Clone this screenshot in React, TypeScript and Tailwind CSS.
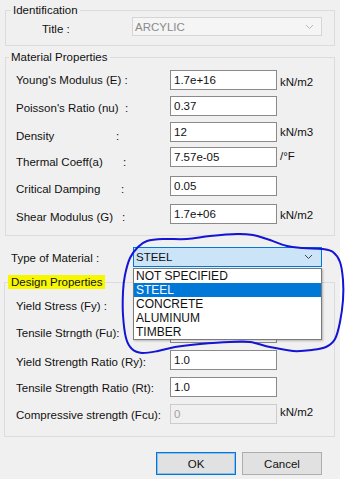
import React from 'react'

const font = "font-['Liberation_Sans',Arial,sans-serif]"

function Chevron({ color }: { color: string }) {
  return (
    <svg width="9" height="6" viewBox="0 0 9 6" className="shrink-0">
      <polyline points="1,1 4.5,4.5 8,1" fill="none" stroke={color} strokeWidth="1" />
    </svg>
  )
}

interface RowProps {
  mt: string
  label: string
  colonW?: string
  lpt: string
  value: string
  unit?: string
  upt?: string
  disabled?: boolean
  pl: string
}

function Row({ mt, label, colonW, lpt, value, unit, upt, disabled, pl }: RowProps) {
  return (
    <div className={`flex items-start h-[20px] ${mt} ${pl}`}>
      <span className={`w-[154px] shrink-0 whitespace-pre ${lpt}`}>
        {colonW ? (
          <>
            <span className={`inline-block ${colonW}`}>{label}</span>:
          </>
        ) : (
          label
        )}
      </span>
      <div
        className={`w-[107px] h-[20px] shrink-0 border pl-[3px] leading-[18px] ${
          disabled
            ? 'border-[#cccccc] bg-[#f0f0f0] text-[#a0a0a0]'
            : 'border-[#8a8a8a] bg-white text-[#111]'
        }`}
      >
        {value}
      </div>
      {unit && <span className={`ml-[3px] ${upt}`}>{unit}</span>}
    </div>
  )
}

// hand drawn circle around the dropdown
const scribble: [number, number][] = [
  [130, 258], [138, 247], [147, 241], [163, 239], [187, 239], [210, 236],
  [237, 234], [253, 235], [267, 239], [287, 246], [303, 248], [323, 249],
  [333, 252], [340, 262], [343, 280], [343, 300], [340, 322], [335, 339],
  [326, 347], [312, 350], [293, 351], [270, 347], [250, 342], [230, 342],
  [200, 344], [175, 347], [158, 351], [142, 353], [132, 349], [126, 338],
  [123, 315], [123, 292], [125, 275],
]

function smoothClosed(p: [number, number][]) {
  const n = p.length
  let d = `M${p[0][0]},${p[0][1]}`
  for (let i = 0; i < n; i++) {
    const p0 = p[(i - 1 + n) % n]
    const p1 = p[i]
    const p2 = p[(i + 1) % n]
    const p3 = p[(i + 2) % n]
    const c1x = p1[0] + (p2[0] - p0[0]) / 6
    const c1y = p1[1] + (p2[1] - p0[1]) / 6
    const c2x = p2[0] - (p3[0] - p1[0]) / 6
    const c2y = p2[1] - (p3[1] - p1[1]) / 6
    d += ` C${c1x.toFixed(1)},${c1y.toFixed(1)} ${c2x.toFixed(1)},${c2y.toFixed(1)} ${p2[0]},${p2[1]}`
  }
  return d
}

const options = ['NOT SPECIFIED', 'STEEL', 'CONCRETE', 'ALUMINUM', 'TIMBER']

export default function App() {
  return (
    <div className={`w-[347px] h-[479px] bg-white ${font} text-[11.5px] text-[#111] leading-[14px]`}>
      <div className="relative w-[340px] h-[479px] bg-[#f0f0f0] pt-[3px]">
        {/* Identification */}
        <fieldset className="ml-[5px] w-[330px] border border-[#dcdcdc] pb-[9px]">
          <legend className="ml-[5px] px-[2px]">Identification</legend>
          <div className="flex items-start pl-[36px]">
            <span className="w-[90px] pt-[5px]">Title :</span>
            <div className="w-[190px] h-[19px] border border-[#d5d5d5] bg-[#f5f5f5] flex items-center justify-between pl-[2px] pr-[7px] text-[#8a8a8a]">
              <span>ARCYLIC</span>
              <Chevron color="#b8b8b8" />
            </div>
          </div>
        </fieldset>

        {/* Material Properties */}
        <fieldset className="mt-[4px] ml-[5px] w-[330px] border border-[#dcdcdc] pb-[11px]">
          <legend className="ml-[3px] px-[2px]">Material Properties</legend>
          <Row pl="pl-[10px]" mt="mt-[6px]" label="Young's Modulus (E) :" lpt="pt-[3px]" value="1.7e+16" unit="kN/m2" upt="pt-[5px]" />
          <Row pl="pl-[10px]" mt="mt-[6px]" label="Poisson's Ratio (nu)" colonW="w-[109px]" lpt="pt-[5px]" value="0.37" />
          <Row pl="pl-[10px]" mt="mt-[6px]" label="Density" colonW="w-[100px]" lpt="pt-[7px]" value="12" unit="kN/m3" upt="pt-[3px]" />
          <Row pl="pl-[10px]" mt="mt-[5px]" label="Thermal Coeff(a)" colonW="w-[107px]" lpt="pt-[8px]" value="7.57e-05" unit="/°F" upt="pt-[2px]" />
          <Row pl="pl-[10px]" mt="mt-[9px]" label="Critical Damping" colonW="w-[105px]" lpt="pt-[6px]" value="0.05" />
          <Row pl="pl-[10px]" mt="mt-[8px]" label="Shear Modulus (G)" colonW="w-[106px]" lpt="pt-[6px]" value="1.7e+06" unit="kN/m2" upt="pt-[4px]" />
        </fieldset>

        {/* Type of Material */}
        <div className="relative z-10 mt-[11px] flex items-start pl-[11px]">
          <span className="w-[122px] pt-[4px]">Type of Material :</span>
          <div className="relative w-[189px] h-[20px] border border-[#0078d7] bg-[#cce4f7] flex items-center justify-between pl-[2px] pr-[8px]">
            <span>STEEL</span>
            <Chevron color="#444444" />
            <div className="absolute left-[-1px] top-[20px] w-[189px] border border-[#7a7a7a] bg-white shadow-[1px_1px_2px_rgba(0,0,0,0.25)]">
              {options.map(o => (
                <div
                  key={o}
                  className={`h-[14px] pl-[2px] text-[12px] leading-[14px] ${
                    o === 'STEEL' ? 'bg-[#0078d7] text-white' : 'text-[#111]'
                  }`}
                >
                  {o}
                </div>
              ))}
            </div>
          </div>
        </div>

        {/* Design Properties */}
        <fieldset className="mt-[8px] ml-[4px] w-[331px] border border-[#dcdcdc] pb-[12px]">
          <legend className="ml-[3px] px-[3px] bg-[#f7f700]">Design Properties</legend>
          <Row pl="pl-[11px]" mt="mt-[7px]" label="Yield Stress (Fy) :" lpt="pt-[3px]" value="" />
          <Row pl="pl-[11px]" mt="mt-[7px]" label="Tensile Strngth (Fu):" lpt="pt-[3px]" value="" />
          <Row pl="pl-[11px]" mt="mt-[7px]" label="Yield Strength Ratio (Ry):" lpt="pt-[5px]" value="1.0" />
          <Row pl="pl-[11px]" mt="mt-[7px]" label="Tensile Strength Ratio (Rt):" lpt="pt-[4px]" value="1.0" />
          <Row pl="pl-[11px]" mt="mt-[7px]" label="Compressive strength (Fcu):" lpt="pt-[4px]" value="0" unit="kN/m2" upt="pt-[1px]" disabled />
        </fieldset>

        {/* buttons */}
        <div className="mt-[15px] flex justify-end gap-[6px] pr-[18px]">
          <button className="w-[80px] h-[23px] border border-[#0078d7] shadow-[inset_0_0_0_1px_#8fbde9] bg-[#e1e1e1] text-[#111]">
            OK
          </button>
          <button className="w-[80px] h-[23px] border border-[#adadad] bg-[#e1e1e1] text-[#111]">
            Cancel
          </button>
        </div>
      </div>

      {/* annotation */}
      <svg className="absolute left-0 top-0 z-20 pointer-events-none" width="347" height="479" viewBox="0 0 347 479">
        <path d={smoothClosed(scribble)} fill="none" stroke="#1414d6" strokeWidth="2" strokeLinejoin="round" />
      </svg>
    </div>
  )
}
